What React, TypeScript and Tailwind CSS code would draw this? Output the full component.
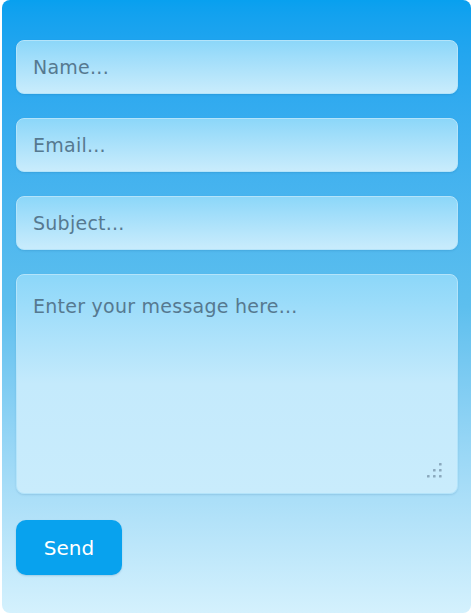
import React from "react";

const fieldClass =
  "h-[54px] w-full rounded-[8px] border border-[#b4e4fa] bg-gradient-to-b from-[#8cd7f9] to-[#c9ecfc] px-[16px] text-[19px] tracking-[0.25px] text-[#567990] placeholder:text-[#567990] shadow-[0_1px_2px_rgba(0,80,140,0.15)] outline-none";

function ResizeGrip() {
  const dots = [
    [12, 0],
    [6, 6],
    [12, 6],
    [0, 12],
    [6, 12],
    [12, 12],
  ];
  return (
    <svg className="pointer-events-none absolute right-[16px] bottom-[16px]" width="15" height="15" viewBox="0 0 15 15">
      {dots.map(([x, y], i) => (
        <rect key={i} x={x} y={y} width="2.6" height="2.6" rx="0.6" fill="#8ba9bd" />
      ))}
    </svg>
  );
}

export default function App() {
  return (
    <div className="min-h-screen bg-white px-[2px]" style={{ fontFamily: '"DejaVu Sans", Verdana, sans-serif' }}>
      <form
        className="flex w-[469px] flex-col rounded-[8px] bg-gradient-to-b from-[#08a0ef] via-[#5dbfee] to-[#d4f1fd] pt-[40px] pb-[38px] pl-[14px] pr-[13px]"
        onSubmit={(e) => e.preventDefault()}
      >
        <div className="flex flex-col gap-[24px]">
          <input type="text" placeholder="Name..." className={fieldClass} />
          <input type="text" placeholder="Email..." className={fieldClass} />
          <input type="text" placeholder="Subject..." className={fieldClass} />
          <div className="relative">
            <textarea
              placeholder="Enter your message here..."
              className="block h-[220px] w-full resize-none rounded-[8px] border border-[#b4e4fa] bg-gradient-to-b from-[#8cd7f9] via-[#c4eafc] to-[#c9ecfc] px-[16px] pt-[17px] text-[19px] tracking-[0.25px] text-[#567990] placeholder:text-[#567990] shadow-[0_1px_2px_rgba(0,80,140,0.15)] outline-none"
            />
            <ResizeGrip />
          </div>
        </div>
        <button
          type="submit"
          className="mt-[26px] h-[55px] w-[106px] rounded-[10px] bg-[#08a2ee] text-[20px] text-white shadow-[0_1px_2px_rgba(0,80,140,0.2)]"
        >
          Send
        </button>
      </form>
    </div>
  );
}
